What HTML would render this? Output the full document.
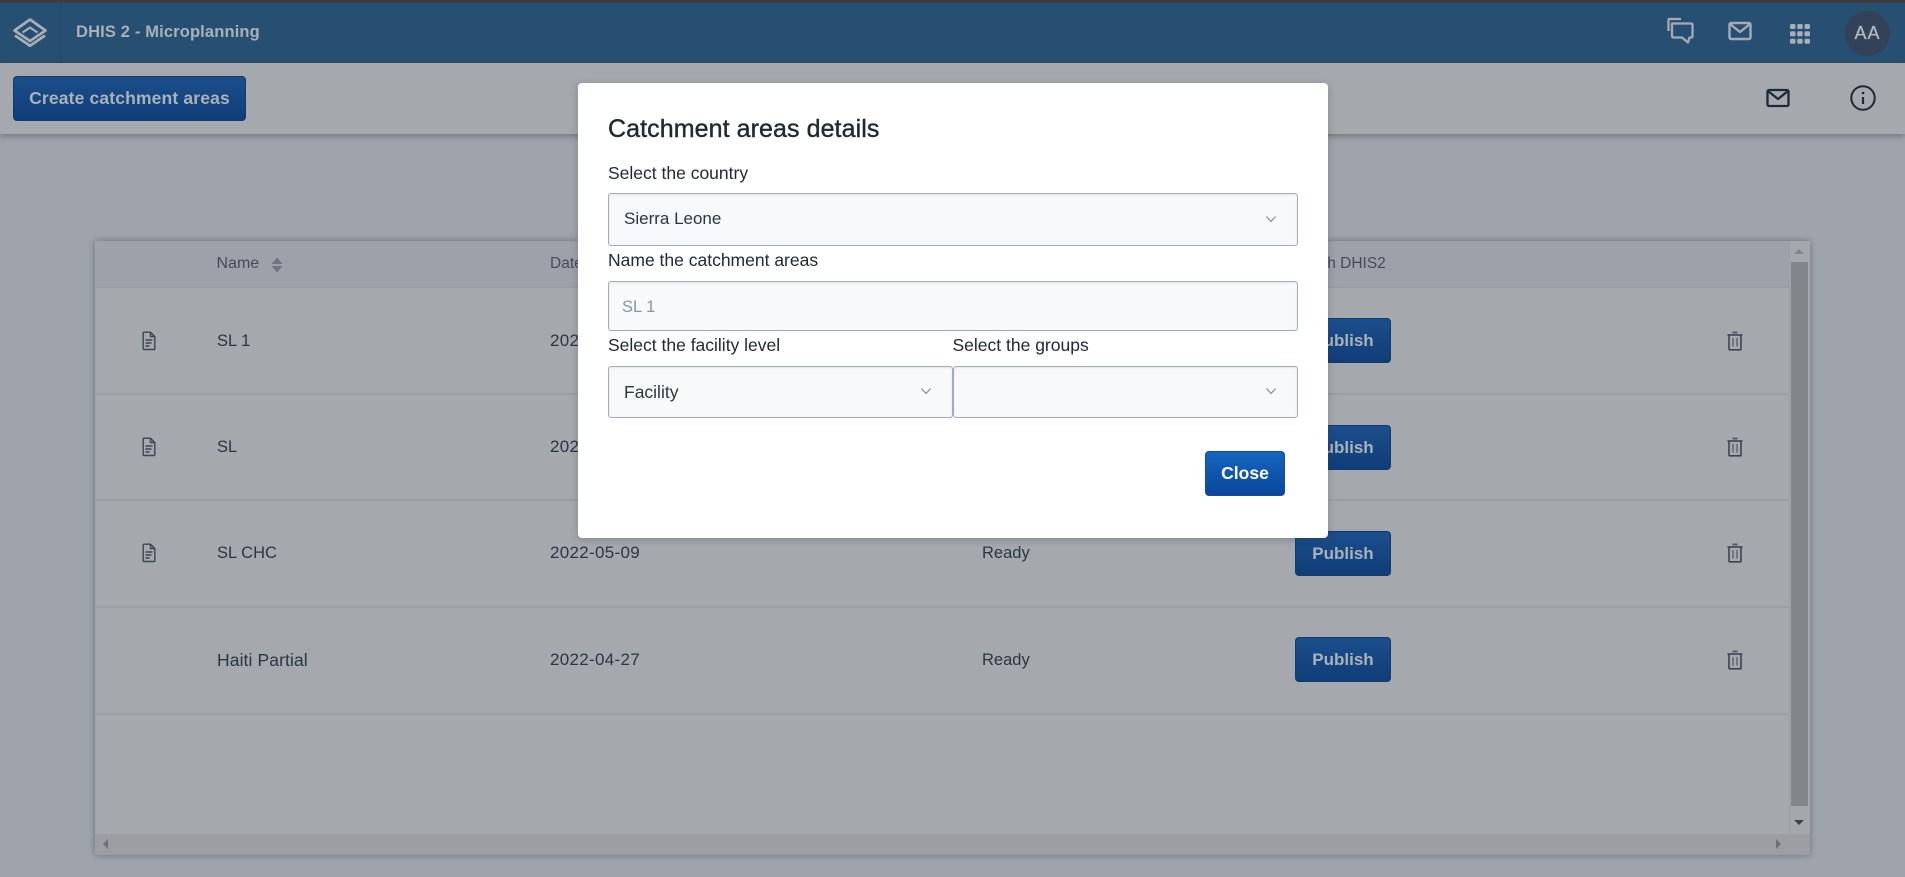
<!DOCTYPE html>
<html>
<head>
<meta charset="utf-8">
<title>DHIS 2 - Microplanning</title>
<style>
html,body{margin:0;padding:0;width:1905px;height:877px;overflow:hidden;background:#9fa3ab;font-family:"Liberation Sans",Arial,sans-serif}
div,span,svg{position:absolute;box-sizing:border-box}
.t{white-space:nowrap;line-height:20px;height:20px;font-size:16px}
.row{left:96px;width:1693px;background:#a5a8ad;border-bottom:2px solid #9b9ea4}
.c{color:#2c3543;font-size:16.5px}
.d{letter-spacing:.3px;font-size:17px}
.pub{left:1295px;width:96px;height:45px;border-radius:4px;background:linear-gradient(#1b4f8c,#103d78);border:1px solid #123b70;color:#aab1bb;font-weight:bold;font-size:17px;text-align:center;line-height:43px}
.lab{color:#212934;font-size:17.5px}
.sel{background:#f8f9fa;border:1px solid #a0adba;border-radius:3px;box-shadow:inset 0 1px 2px rgba(48,54,60,.1)}
.chev{fill:none;stroke:#7f8a99;stroke-width:1.1}
</style>
</head>
<body>
<!-- top strip -->
<div style="left:0;top:0;width:1905px;height:3px;background:#3d3e41"></div>
<!-- header -->
<div style="left:0;top:3px;width:1905px;height:60px;background:#274f72"></div>
<div style="left:60px;top:3px;width:1px;height:60px;background:#23496a"></div>
<svg style="left:0;top:0" width="60" height="60" viewBox="0 0 60 60" fill="none" stroke="#a9afb8" stroke-width="2.7" stroke-linejoin="round">
<path d="M30 19.5 L45.5 30.5 L30 41 L14.5 30.5Z"/>
<path d="M22.5 32.5 L30 27.5 L37.5 32.5" stroke-width="2.2"/>
<path d="M15 35.5 L30 45.8 L45 35.5"/>
</svg>
<div class="t" style="left:76px;top:22px;color:#a9b0ba;font-weight:bold;font-size:16.5px;letter-spacing:.15px">DHIS 2 - Microplanning</div>

<svg style="left:1660px;top:10px" width="40" height="40" viewBox="0 0 40 40" fill="none" stroke="#a4abb5" stroke-width="2.3" stroke-linejoin="round">
<path d="M8.5 21 V10 Q8.5 9 9.5 9 H21"/>
<path d="M12 13.5 H31 Q32.5 13.5 32.5 15 V26 Q32.5 27.5 31 27.5 H29.5 L28 32.5 L22 27.5 H14 Q12 27.5 12 26Z"/>
</svg>
<svg style="left:1728px;top:21px" width="24" height="20" viewBox="0 0 24 20" fill="none" stroke="#a4abb5" stroke-width="2.4" stroke-linejoin="round">
<rect x="1.5" y="2" width="21" height="16" rx="1.5"/>
<path d="M2 3 L12 11 L22 3"/>
</svg>
<svg style="left:1790px;top:24px" width="20" height="20" viewBox="0 0 20 20" fill="#a9afb8">
<rect x="0" y="0" width="5.5" height="5" rx="1.6"/><rect x="7.2" y="0" width="5.5" height="5" rx="1.6"/><rect x="14.5" y="0" width="5.5" height="5" rx="1.6"/>
<rect x="0" y="7.3" width="5.5" height="5" rx="1.6"/><rect x="7.2" y="7.3" width="5.5" height="5" rx="1.6"/><rect x="14.5" y="7.3" width="5.5" height="5" rx="1.6"/>
<rect x="0" y="14.7" width="5.5" height="5" rx="1.6"/><rect x="7.2" y="14.7" width="5.5" height="5" rx="1.6"/><rect x="14.5" y="14.7" width="5.5" height="5" rx="1.6"/>
</svg>
<div style="left:1845px;top:11px;width:45px;height:45px;border-radius:50%;background:#334258;color:#b3b8bf;font-size:18px;text-align:center;line-height:45px;letter-spacing:1px;-webkit-text-stroke:.3px #b3b8bf">AA</div>

<!-- toolbar -->
<div style="left:0;top:63px;width:1905px;height:71px;background:#a5a8ad;box-shadow:0 2px 6px rgba(40,44,52,.4)"></div>
<div style="left:13px;top:76px;width:233px;height:45px;border-radius:4px;background:linear-gradient(#1b4f8c,#103d78);border:1px solid #123b70;color:#aab1bb;font-weight:bold;font-size:17.5px;letter-spacing:.15px;text-align:center;line-height:43px">Create catchment areas</div>
<svg style="left:1766px;top:87px" width="24" height="22" viewBox="0 0 24 22" fill="none" stroke="#1f2a38" stroke-width="2.3" stroke-linejoin="round">
<rect x="1.5" y="3" width="21" height="16" rx="1.5"/>
<path d="M2 4 L12 12 L22 4"/>
</svg>
<svg style="left:1849px;top:84px" width="28" height="28" viewBox="0 0 28 28" fill="none" stroke="#1f2a38" stroke-width="2">
<circle cx="14" cy="14" r="11.7"/>
<path d="M14 13 V20" stroke-width="2.2"/>
<circle cx="14" cy="9" r="1.3" fill="#1f2a38" stroke="none"/>
</svg>

<!-- table -->
<div style="left:95px;top:241px;width:1715px;height:614px;background:#a5a8ad;box-shadow:0 0 6px rgba(40,44,52,.45)"></div>
<div style="left:96px;top:241px;width:1693px;height:47px;background:#9da1a9;border-bottom:1px solid #979ba2"></div>
<div class="t" style="left:216.5px;top:254px;color:#444c59;font-size:16px">Name</div>
<svg style="left:271px;top:257px" width="12" height="16" viewBox="0 0 12 16" fill="#6f7682"><path d="M6 0.5 L11.5 7 H0.5Z"/><path d="M6 15.5 L11.5 9 H0.5Z"/></svg>
<div class="t" style="left:550px;top:254px;color:#444c59;font-size:15.5px">Date</div>
<div class="t" style="left:982px;top:254px;color:#444c59;font-size:15.5px">Status</div>
<div class="t" style="left:1285px;top:254px;color:#444c59;font-size:15.5px">Publish DHIS2</div>

<div class="row" style="top:288px;height:107px"></div>
<div class="row" style="top:395px;height:106px"></div>
<div class="row" style="top:501px;height:107px"></div>
<div class="row" style="top:608px;height:107px"></div>

<!-- row contents -->
<div class="t c" style="left:217px;top:331px">SL 1</div>
<div class="t c d" style="left:550px;top:331px">2022-05-10</div>
<div class="t c" style="left:982px;top:331px">Ready</div>
<div class="pub" style="top:318px">Publish</div>

<div class="t c" style="left:217px;top:437px">SL</div>
<div class="t c d" style="left:550px;top:437px">2022-05-09</div>
<div class="t c" style="left:982px;top:437px">Ready</div>
<div class="pub" style="top:425px">Publish</div>

<div class="t c" style="left:217px;top:543px">SL CHC</div>
<div class="t c d" style="left:550px;top:543px">2022-05-09</div>
<div class="t c" style="left:982px;top:543px">Ready</div>
<div class="pub" style="top:531px">Publish</div>

<div class="t c" style="left:217px;top:650px;font-size:17.5px;letter-spacing:.1px">Haiti Partial</div>
<div class="t c d" style="left:550px;top:650px">2022-04-27</div>
<div class="t c" style="left:982px;top:650px">Ready</div>
<div class="pub" style="top:637px">Publish</div>

<!-- doc icons -->
<svg style="left:142px;top:331px" width="14" height="20" viewBox="0 0 14 20" fill="none" stroke="#3d4552" stroke-width="1.4"><path d="M1.2 2 Q1.2 1.2 2 1.2 H8.5 L12.8 5.5 V17.5 Q12.8 18.5 12 18.5 H2 Q1.2 18.5 1.2 17.5Z"/><path d="M8.5 1.2 V5.5 H12.8"/><path d="M3.5 9 H10.5 M3.5 12 H9.5 M3.5 15 H7.5"/></svg>
<svg style="left:142px;top:437px" width="14" height="20" viewBox="0 0 14 20" fill="none" stroke="#3d4552" stroke-width="1.4"><path d="M1.2 2 Q1.2 1.2 2 1.2 H8.5 L12.8 5.5 V17.5 Q12.8 18.5 12 18.5 H2 Q1.2 18.5 1.2 17.5Z"/><path d="M8.5 1.2 V5.5 H12.8"/><path d="M3.5 9 H10.5 M3.5 12 H9.5 M3.5 15 H7.5"/></svg>
<svg style="left:142px;top:543px" width="14" height="20" viewBox="0 0 14 20" fill="none" stroke="#3d4552" stroke-width="1.4"><path d="M1.2 2 Q1.2 1.2 2 1.2 H8.5 L12.8 5.5 V17.5 Q12.8 18.5 12 18.5 H2 Q1.2 18.5 1.2 17.5Z"/><path d="M8.5 1.2 V5.5 H12.8"/><path d="M3.5 9 H10.5 M3.5 12 H9.5 M3.5 15 H7.5"/></svg>

<!-- trash icons -->
<svg style="left:1727px;top:331px" width="16" height="20" viewBox="0 0 16 20" fill="none" stroke="#3d4552" stroke-width="1.6"><path d="M0.5 4 H15.5"/><path d="M5.5 1.5 H10.5" stroke-width="2" stroke="#565c67"/><path d="M2 4 V18 Q2 18.8 2.8 18.8 H13.2 Q14 18.8 14 18 V4"/><path d="M6 7 V15.5 M10 7 V15.5" stroke="#6c727c" stroke-width="1.8"/></svg>
<svg style="left:1727px;top:437px" width="16" height="20" viewBox="0 0 16 20" fill="none" stroke="#3d4552" stroke-width="1.6"><path d="M0.5 4 H15.5"/><path d="M5.5 1.5 H10.5" stroke-width="2" stroke="#565c67"/><path d="M2 4 V18 Q2 18.8 2.8 18.8 H13.2 Q14 18.8 14 18 V4"/><path d="M6 7 V15.5 M10 7 V15.5" stroke="#6c727c" stroke-width="1.8"/></svg>
<svg style="left:1727px;top:543px" width="16" height="20" viewBox="0 0 16 20" fill="none" stroke="#3d4552" stroke-width="1.6"><path d="M0.5 4 H15.5"/><path d="M5.5 1.5 H10.5" stroke-width="2" stroke="#565c67"/><path d="M2 4 V18 Q2 18.8 2.8 18.8 H13.2 Q14 18.8 14 18 V4"/><path d="M6 7 V15.5 M10 7 V15.5" stroke="#6c727c" stroke-width="1.8"/></svg>
<svg style="left:1727px;top:650px" width="16" height="20" viewBox="0 0 16 20" fill="none" stroke="#3d4552" stroke-width="1.6"><path d="M0.5 4 H15.5"/><path d="M5.5 1.5 H10.5" stroke-width="2" stroke="#565c67"/><path d="M2 4 V18 Q2 18.8 2.8 18.8 H13.2 Q14 18.8 14 18 V4"/><path d="M6 7 V15.5 M10 7 V15.5" stroke="#6c727c" stroke-width="1.8"/></svg>

<!-- scrollbars -->
<div style="left:1789px;top:241px;width:21px;height:593px;background:#a4a7ac;border-left:1px solid #9b9ea4"></div>
<div style="left:1791px;top:262px;width:17px;height:544px;background:#82858a"></div>
<svg style="left:1794px;top:248px" width="10" height="7"><path d="M5 1 L10 6 H0Z" fill="#83868c"/></svg>
<svg style="left:1794px;top:819px" width="10" height="7"><path d="M5 6 L10 1 H0Z" fill="#3f4348"/></svg>
<div style="left:95px;top:834px;width:1715px;height:21px;background:#9c9ea3"></div>
<svg style="left:102px;top:839px" width="7" height="10"><path d="M1 5 L6 0 V10Z" fill="#6d7076"/></svg>
<svg style="left:1775px;top:839px" width="7" height="10"><path d="M6 5 L1 0 V10Z" fill="#6d7076"/></svg>

<!-- modal -->
<div style="left:578px;top:83px;width:750px;height:455px;background:#fff;border-radius:4px;box-shadow:0 2px 8px rgba(40,44,52,.25)"></div>
<div class="t" style="left:608px;top:115px;height:28px;line-height:28px;font-size:25px;color:#212934;letter-spacing:.08px;-webkit-text-stroke:.4px #212934">Catchment areas details</div>

<div class="t lab" style="left:608px;top:163px">Select the country</div>
<div class="sel" style="left:608px;top:193px;width:690px;height:53px"></div>
<div class="t c" style="left:624px;top:209px;font-size:17px">Sierra Leone</div>
<svg style="left:1265px;top:215px" width="12" height="8"><path class="chev" d="M1.5 1.5 L6 6.5 L10.5 1.5"/></svg>

<div class="t lab" style="left:608px;top:250px">Name the catchment areas</div>
<div class="sel" style="left:608px;top:281px;width:690px;height:50px"></div>
<div class="t" style="left:622px;top:297px;color:#8b95a5;font-size:16.5px">SL 1</div>

<div class="t lab" style="left:608px;top:335px">Select the facility level</div>
<div class="t lab" style="left:952.5px;top:335px">Select the groups</div>
<div class="sel" style="left:608px;top:366px;width:345px;height:52px"></div>
<div class="sel" style="left:953px;top:366px;width:345px;height:52px"></div>
<div class="t c" style="left:624px;top:382px;font-size:17.5px">Facility</div>
<svg style="left:920px;top:387px" width="12" height="8"><path class="chev" d="M1.5 1.5 L6 6.5 L10.5 1.5"/></svg>
<svg style="left:1265px;top:387px" width="12" height="8"><path class="chev" d="M1.5 1.5 L6 6.5 L10.5 1.5"/></svg>

<div style="left:1205px;top:451px;width:80px;height:45px;border-radius:4px;background:linear-gradient(#1565c0,#0a479c);border:1px solid #0f4fa3;color:#fff;font-weight:bold;font-size:17.5px;text-align:center;line-height:43px">Close</div>
</body>
</html>
